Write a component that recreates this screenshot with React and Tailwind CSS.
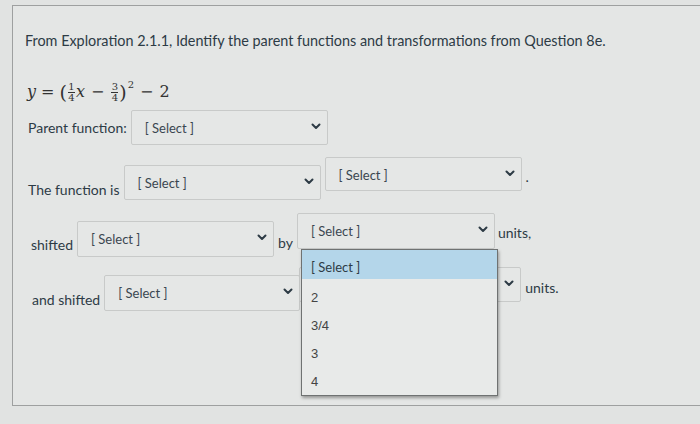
import React from "react";

function Chevron() {
  return (
    <svg width="10" height="7" viewBox="0 0 10 7" className="shrink-0">
      <path d="M1.5 1.5 L5 5 L8.5 1.5" fill="none" stroke="#2d3b45" strokeWidth="2" strokeLinecap="round" strokeLinejoin="round" />
    </svg>
  );
}

function Sel({ w = 197, h = 35, className = "", hideText = false }) {
  return (
    <div
      className={`relative shrink-0 border border-[#c8cac9] bg-[#e5e7e6] rounded-[2px] ${className}`}
      style={{ width: w, height: h }}
    >
      {!hideText && (
        <span className="absolute left-[13px] top-[8px] text-[13px] text-[#3a4650]">[ Select ]</span>
      )}
      <span className="absolute right-[6px] top-[12px]"><Chevron /></span>
    </div>
  );
}

function Frac({ n, d }) {
  return (
    <span className="inline-flex flex-col items-center leading-none mx-[1px] align-middle text-[10px] not-italic">
      <span className="leading-[10px]">{n}</span>
      <span className="block w-[7px] h-px bg-[#333]"></span>
      <span className="leading-[10px]">{d}</span>
    </span>
  );
}

export default function App() {
  return (
    <div
      className="relative w-[700px] h-[424px] overflow-hidden bg-[#e1e3e2] text-[#2d3b45]"
      style={{ fontFamily: "Lato, 'Open Sans', sans-serif" }}
    >
      <div className="ml-[12px] mt-[5px] h-[401px] border-l border-t border-b border-[#9ea0a0] bg-[#e4e6e5]">
        <div className="pl-[12px] pt-[25px] text-[14.4px] leading-[20px]">
          From Exploration 2.1.1, Identify the parent functions and transformations from Question 8e.
        </div>
        <div
          className="ml-[14px] mt-[29px] flex items-center h-[24px] text-[16px] text-[#333]"
          style={{ fontFamily: "'DejaVu Serif', 'Liberation Serif', serif" }}
        >
          <span className="italic">y</span>
          <span className="mx-[5px]">=</span>
          <span className="text-[19px] font-light">(</span>
          <Frac n="1" d="4" />
          <span className="italic">x</span>
          <span className="mx-[6px]">−</span>
          <Frac n="3" d="4" />
          <span className="text-[19px] font-light">)</span>
          <span className="text-[10px] self-start -mt-[3px] ml-[1px]">2</span>
          <span className="mx-[6px]">−</span>
          <span>2</span>
        </div>

        <div className="ml-[15px] mt-[6px] flex items-center gap-[4px] text-[14px]">
          <span>Parent function:</span>
          <Sel w={197} h={35} />
        </div>

        <div className="ml-[15px] mt-[12px] flex items-start text-[14px]">
          <span className="mt-[22px] mr-[4px]">The function is</span>
          <Sel w={197} h={35} className="mt-[8px]" />
          <Sel w={197} h={34} className="ml-[4px]" />
          <span className="mt-[9px] ml-[4px]">.</span>
        </div>

        <div className="ml-[18px] mt-[13px] flex items-start text-[14px]">
          <span className="mt-[21px] mr-[4px]">shifted</span>
          <Sel w={197} h={36} className="mt-[8px]" />
          <span className="mt-[19px] mx-[4px]">by</span>
          <Sel w={198} h={36} />
          <span className="mt-[9px] ml-[3px]">units,</span>
        </div>

        <div className="ml-[19px] mt-[10px] flex items-start text-[14px]">
          <span className="mt-[22px] mr-[4px]">and shifted</span>
          <Sel w={196} h={36} className="mt-[8px]" />
          <Sel w={222} h={35} className="-ml-[1px]" hideText />
          <span className="mt-[10px] ml-[4px]">units.</span>
        </div>
      </div>

      <div className="absolute left-[301px] top-[249px] w-[197px] h-[147px] border border-[#6f7272] bg-[#e8eae9] shadow-[1px_2px_3px_rgba(0,0,0,0.35)] text-[13px]">
        <div className="h-[29px] bg-[#b4d6ea] pl-[9px] pt-[8px] text-[#2d3b45]">[ Select ]</div>
        <div className="h-[28px] pl-[9px] pt-[9px] text-[#444]" style={{ fontFamily: "'Liberation Sans', Arial, sans-serif" }}>2</div>
        <div className="h-[28px] pl-[9px] pt-[9px] text-[#444]" style={{ fontFamily: "'Liberation Sans', Arial, sans-serif" }}>3/4</div>
        <div className="h-[28px] pl-[9px] pt-[9px] text-[#444]" style={{ fontFamily: "'Liberation Sans', Arial, sans-serif" }}>3</div>
        <div className="h-[28px] pl-[9px] pt-[9px] text-[#444]" style={{ fontFamily: "'Liberation Sans', Arial, sans-serif" }}>4</div>
      </div>
    </div>
  );
}
